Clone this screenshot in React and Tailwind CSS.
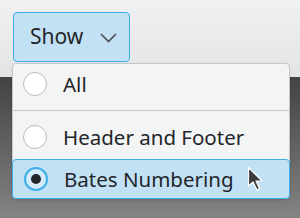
import React from "react";

function Radio({ checked }) {
  if (checked) {
    return (
      <span className="flex h-[24px] w-[24px] shrink-0 items-center justify-center rounded-full border-2 border-[#3daee9] bg-[#d5ebf8]">
        <span className="h-[10px] w-[10px] rounded-full bg-[#232629]" />
      </span>
    );
  }
  return <span className="h-[24px] w-[24px] shrink-0 rounded-full border-[1.5px] border-[#b9babb] bg-white" />;
}

function Item({ label, checked, className = "" }) {
  return (
    <div className={`flex h-[40px] items-center gap-[16px] pl-[10px] text-[20.5px] text-[#232629] ${className}`}>
      <Radio checked={checked} />
      <span className="leading-none">{label}</span>
    </div>
  );
}

export default function App() {
  return (
    <div className="relative h-[218px] w-[300px] overflow-hidden font-['Noto_Sans',sans-serif]">
      {/* Toolbar area */}
      <div className="h-[77px] bg-gradient-to-b from-[#f0f1f2] to-[#e3e4e5] pl-[13px] pt-[12px]">
        <button className="flex h-[50px] w-[117px] items-center justify-between rounded-[4px] border border-[#3daee9] bg-[#c2e1f5] pl-[16px] pr-[12px] text-[21px] text-[#232629]">
          <span>Show</span>
          <svg width="17" height="11" viewBox="0 0 17 11" fill="none" stroke="#4d4f51" strokeWidth="1.6">
            <path d="M1 2l7.5 7.5 7.5-7.5" />
          </svg>
        </button>
      </div>
      {/* Window behind */}
      <div className="h-[141px] bg-gradient-to-b from-[#434343] to-[#848484]" />

      {/* Dropdown menu */}
      <div className="absolute left-[12px] top-[63px] w-[278px] rounded-[4px] border border-[#c6c7c8] bg-[#f3f4f4] shadow-sm">
        <Item label="All" checked={false} />
        <div className="my-[6px] h-px bg-[#c3c4c5]" />
        <Item label="Header and Footer" checked={false} />
        <Item
          label="Bates Numbering"
          checked
          className="-mx-px -mb-px mt-[2px] rounded-[4px] border border-[#3daee9] bg-[#c2e1f5] pl-[11px]"
        />
      </div>

      {/* Mouse cursor */}
      <svg className="absolute left-[247px] top-[166px]" width="18" height="26" viewBox="0 0 18 26">
        <path d="M1.5 1.5 L1.5 20 L6 16 L10 24 L12.5 22.5 L9 15 L15 15 Z" fill="#3b3c3d" stroke="#fff" strokeWidth="1.2" strokeLinejoin="round" />
      </svg>
    </div>
  );
}
